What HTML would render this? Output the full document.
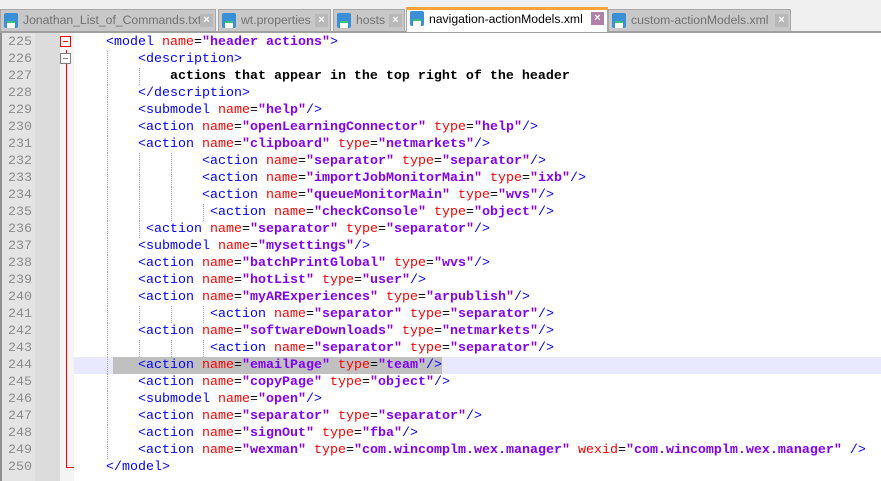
<!DOCTYPE html>
<html><head><meta charset="utf-8"><style>
*{margin:0;padding:0;box-sizing:border-box}
body{width:881px;height:481px;overflow:hidden;background:#fff;font-family:"Liberation Sans",sans-serif;position:relative}
#top{position:absolute;left:0;top:0;width:881px;height:33px;background:#f0f0f0;border-bottom:2px solid #a0a0a0}
.tab{position:absolute;top:9px;height:22px;background:#c8c8c8;border:1px solid #a8a8a8;border-bottom:none;font-size:12.2px;color:#707070;line-height:20px;padding-left:22px;white-space:nowrap;overflow:hidden}
.tab.act{background:#fff;color:#000;top:7px;height:25px;border-top:3px solid #f9a33a;line-height:19px}
.ic{position:absolute;left:3px;top:3px;width:14px;height:15px;background:#3a8fd6;border-radius:2px}
.ic:after{content:"";position:absolute;left:3px;top:8px;width:8px;height:5px;background:#fff;border-top:2px solid #3ac07a}
.x{position:absolute;top:4px;width:13px;height:13px;background:#b8b8b8;color:#fff;font-size:11px;line-height:13px;text-align:center;font-weight:bold}
.act .x{background:#b080a8}
#gut{position:absolute;left:0;top:33px;width:60px;height:448px;background:#e4e4e4;border-left:2px solid #909090}
#gut2{position:absolute;left:35px;top:33px;width:25px;height:448px;background:#dcdcdc}
#fold{position:absolute;left:60px;top:33px;width:14px;height:448px;background:#f4f4f4}
#code{position:absolute;left:0;top:34px;width:881px;font-family:"Liberation Mono",monospace;font-size:13.33px;font-weight:bold}
.l{height:17px;line-height:17px;white-space:pre;position:relative}
.n{position:absolute;left:8px;color:#8a8a8a;font-weight:normal}
.c{position:absolute;left:74px}
.t{color:#0000ff;font-weight:normal}.a{color:#ff0000;font-weight:normal}.v{color:#8000ff}.e{color:#000;font-weight:normal}
.g{position:absolute;top:0;height:17px;border-left:1px dotted #aaa}
</style></head><body>
<div id="top">
<div class="tab" style="left:0;width:216px"><span class="ic"></span>Jonathan_List_of_Commands.txt<span class="x" style="left:199px">×</span></div>
<div class="tab" style="left:218px;width:113px"><span class="ic"></span>wt.properties<span class="x" style="left:96px">×</span></div>
<div class="tab" style="left:333px;width:72px"><span class="ic"></span>hosts<span class="x" style="left:55px">×</span></div>
<div class="tab act" style="left:406px;width:202px"><span class="ic" style="top:1px"></span>navigation-actionModels.xml<span class="x" style="left:184px;top:2px">×</span></div>
<div class="tab" style="left:608px;width:183px"><span class="ic"></span>custom-actionModels.xml<span class="x" style="left:166px">×</span></div>
</div>
<div id="gut"></div><div id="gut2"></div><div id="fold"></div>
<div style="position:absolute;left:66px;top:50px;width:1px;height:418px;background:#f00"></div>
<div style="position:absolute;left:66px;top:467px;width:8px;height:1px;background:#f00"></div>
<div style="position:absolute;left:60px;top:36px;width:11px;height:11px;border:1px solid #f00;background:#fff"><div style="position:absolute;left:2px;top:4px;width:5px;height:1px;background:#f00"></div></div>
<div style="position:absolute;left:60px;top:53px;width:11px;height:11px;border:1px solid #808080;background:#fff"><div style="position:absolute;left:2px;top:4px;width:5px;height:1px;background:#808080"></div></div>
<div style="position:absolute;left:74px;top:357px;width:807px;height:17px;background:#e8e8ff"></div>
<div style="position:absolute;left:113px;top:357px;width:329px;height:17px;background:#c0c0c0"></div>
<div id="code">
<div class="l"><span class="n">225</span><span class="c">    <span class="t">&lt;model</span> <span class="a">name</span><span class="e">=</span><span class="v">"header actions"</span><span class="t">&gt;</span></span></div>
<div class="l"><span class="n">226</span><span class="g" style="left:107px"></span><span class="c">        <span class="t">&lt;description&gt;</span></span></div>
<div class="l"><span class="n">227</span><span class="g" style="left:107px"></span><span class="g" style="left:139px"></span><span class="c">            actions that appear in the top right of the header</span></div>
<div class="l"><span class="n">228</span><span class="g" style="left:107px"></span><span class="c">        <span class="t">&lt;/description&gt;</span></span></div>
<div class="l"><span class="n">229</span><span class="g" style="left:107px"></span><span class="c">        <span class="t">&lt;submodel</span> <span class="a">name</span><span class="e">=</span><span class="v">"help"</span><span class="t">/&gt;</span></span></div>
<div class="l"><span class="n">230</span><span class="g" style="left:107px"></span><span class="c">        <span class="t">&lt;action</span> <span class="a">name</span><span class="e">=</span><span class="v">"openLearningConnector"</span> <span class="a">type</span><span class="e">=</span><span class="v">"help"</span><span class="t">/&gt;</span></span></div>
<div class="l"><span class="n">231</span><span class="g" style="left:107px"></span><span class="c">        <span class="t">&lt;action</span> <span class="a">name</span><span class="e">=</span><span class="v">"clipboard"</span> <span class="a">type</span><span class="e">=</span><span class="v">"netmarkets"</span><span class="t">/&gt;</span></span></div>
<div class="l"><span class="n">232</span><span class="g" style="left:107px"></span><span class="g" style="left:139px"></span><span class="g" style="left:171px"></span><span class="c">                <span class="t">&lt;action</span> <span class="a">name</span><span class="e">=</span><span class="v">"separator"</span> <span class="a">type</span><span class="e">=</span><span class="v">"separator"</span><span class="t">/&gt;</span></span></div>
<div class="l"><span class="n">233</span><span class="g" style="left:107px"></span><span class="g" style="left:139px"></span><span class="g" style="left:171px"></span><span class="c">                <span class="t">&lt;action</span> <span class="a">name</span><span class="e">=</span><span class="v">"importJobMonitorMain"</span> <span class="a">type</span><span class="e">=</span><span class="v">"ixb"</span><span class="t">/&gt;</span></span></div>
<div class="l"><span class="n">234</span><span class="g" style="left:107px"></span><span class="g" style="left:139px"></span><span class="g" style="left:171px"></span><span class="c">                <span class="t">&lt;action</span> <span class="a">name</span><span class="e">=</span><span class="v">"queueMonitorMain"</span> <span class="a">type</span><span class="e">=</span><span class="v">"wvs"</span><span class="t">/&gt;</span></span></div>
<div class="l"><span class="n">235</span><span class="g" style="left:107px"></span><span class="g" style="left:139px"></span><span class="g" style="left:171px"></span><span class="g" style="left:203px"></span><span class="c">                 <span class="t">&lt;action</span> <span class="a">name</span><span class="e">=</span><span class="v">"checkConsole"</span> <span class="a">type</span><span class="e">=</span><span class="v">"object"</span><span class="t">/&gt;</span></span></div>
<div class="l"><span class="n">236</span><span class="g" style="left:107px"></span><span class="g" style="left:139px"></span><span class="c">         <span class="t">&lt;action</span> <span class="a">name</span><span class="e">=</span><span class="v">"separator"</span> <span class="a">type</span><span class="e">=</span><span class="v">"separator"</span><span class="t">/&gt;</span></span></div>
<div class="l"><span class="n">237</span><span class="g" style="left:107px"></span><span class="c">        <span class="t">&lt;submodel</span> <span class="a">name</span><span class="e">=</span><span class="v">"mysettings"</span><span class="t">/&gt;</span></span></div>
<div class="l"><span class="n">238</span><span class="g" style="left:107px"></span><span class="c">        <span class="t">&lt;action</span> <span class="a">name</span><span class="e">=</span><span class="v">"batchPrintGlobal"</span> <span class="a">type</span><span class="e">=</span><span class="v">"wvs"</span><span class="t">/&gt;</span></span></div>
<div class="l"><span class="n">239</span><span class="g" style="left:107px"></span><span class="c">        <span class="t">&lt;action</span> <span class="a">name</span><span class="e">=</span><span class="v">"hotList"</span> <span class="a">type</span><span class="e">=</span><span class="v">"user"</span><span class="t">/&gt;</span></span></div>
<div class="l"><span class="n">240</span><span class="g" style="left:107px"></span><span class="c">        <span class="t">&lt;action</span> <span class="a">name</span><span class="e">=</span><span class="v">"myARExperiences"</span> <span class="a">type</span><span class="e">=</span><span class="v">"arpublish"</span><span class="t">/&gt;</span></span></div>
<div class="l"><span class="n">241</span><span class="g" style="left:107px"></span><span class="g" style="left:139px"></span><span class="g" style="left:171px"></span><span class="g" style="left:203px"></span><span class="c">                 <span class="t">&lt;action</span> <span class="a">name</span><span class="e">=</span><span class="v">"separator"</span> <span class="a">type</span><span class="e">=</span><span class="v">"separator"</span><span class="t">/&gt;</span></span></div>
<div class="l"><span class="n">242</span><span class="g" style="left:107px"></span><span class="c">        <span class="t">&lt;action</span> <span class="a">name</span><span class="e">=</span><span class="v">"softwareDownloads"</span> <span class="a">type</span><span class="e">=</span><span class="v">"netmarkets"</span><span class="t">/&gt;</span></span></div>
<div class="l"><span class="n">243</span><span class="g" style="left:107px"></span><span class="g" style="left:139px"></span><span class="g" style="left:171px"></span><span class="g" style="left:203px"></span><span class="c">                 <span class="t">&lt;action</span> <span class="a">name</span><span class="e">=</span><span class="v">"separator"</span> <span class="a">type</span><span class="e">=</span><span class="v">"separator"</span><span class="t">/&gt;</span></span></div>
<div class="l"><span class="n">244</span><span class="g" style="left:107px"></span><span class="c">        <span class="t">&lt;action</span> <span class="a">name</span><span class="e">=</span><span class="v">"emailPage"</span> <span class="a">type</span><span class="e">=</span><span class="v">"team"</span><span class="t">/&gt;</span></span></div>
<div class="l"><span class="n">245</span><span class="g" style="left:107px"></span><span class="c">        <span class="t">&lt;action</span> <span class="a">name</span><span class="e">=</span><span class="v">"copyPage"</span> <span class="a">type</span><span class="e">=</span><span class="v">"object"</span><span class="t">/&gt;</span></span></div>
<div class="l"><span class="n">246</span><span class="g" style="left:107px"></span><span class="c">        <span class="t">&lt;submodel</span> <span class="a">name</span><span class="e">=</span><span class="v">"open"</span><span class="t">/&gt;</span></span></div>
<div class="l"><span class="n">247</span><span class="g" style="left:107px"></span><span class="c">        <span class="t">&lt;action</span> <span class="a">name</span><span class="e">=</span><span class="v">"separator"</span> <span class="a">type</span><span class="e">=</span><span class="v">"separator"</span><span class="t">/&gt;</span></span></div>
<div class="l"><span class="n">248</span><span class="g" style="left:107px"></span><span class="c">        <span class="t">&lt;action</span> <span class="a">name</span><span class="e">=</span><span class="v">"signOut"</span> <span class="a">type</span><span class="e">=</span><span class="v">"fba"</span><span class="t">/&gt;</span></span></div>
<div class="l"><span class="n">249</span><span class="g" style="left:107px"></span><span class="c">        <span class="t">&lt;action</span> <span class="a">name</span><span class="e">=</span><span class="v">"wexman"</span> <span class="a">type</span><span class="e">=</span><span class="v">"com.wincomplm.wex.manager"</span> <span class="a">wexid</span><span class="e">=</span><span class="v">"com.wincomplm.wex.manager"</span> <span class="t">/&gt;</span></span></div>
<div class="l"><span class="n">250</span><span class="c">    <span class="t">&lt;/model&gt;</span></span></div>
</div>
</body></html>
